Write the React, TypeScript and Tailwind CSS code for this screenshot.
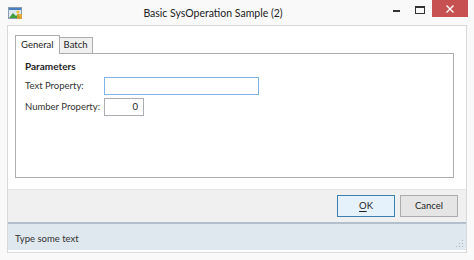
export default function App() {
  return (
    <div className="w-[474px] h-[260px] bg-[#f9f9f9] flex flex-col font-['Lato','Noto_Sans',sans-serif] text-[9.5px] text-[#1e1e1e] overflow-hidden whitespace-nowrap">
      {/* title bar */}
      <div className="h-[25px] flex items-start relative shrink-0">
        <svg className="ml-[8px] mt-[7px]" width="14" height="12" viewBox="0 0 14 12">
          <rect x="0.5" y="0.5" width="13" height="11" fill="#dfe8f2" stroke="#8a9bb0" />
          <rect x="1" y="1" width="12" height="2" fill="#4a7fc0" />
          <path d="M1 11 L5 6 L8 9 L10 7 L13 11 Z" fill="#3f9d3a" />
          <circle cx="10" cy="5" r="1.6" fill="#f2c230" />
          <rect x="9" y="7" width="5" height="5" fill="#e8a020" opacity="0.8" />
        </svg>
        <div className="flex-1 text-center text-[10.5px] leading-none pt-[8px] pl-[20px] text-[#222]">Basic SysOperation Sample (2)</div>
        <div className="flex items-start">
          <div className="w-[24px] h-[17px] flex items-center justify-center pt-[4px]">
            <div className="w-[7px] h-[2px] bg-[#333]" />
          </div>
          <div className="w-[24px] h-[17px] flex items-start justify-center pt-[6px]">
            <div className="w-[10px] h-[8px] border border-[#333] border-t-2" />
          </div>
          <div className="w-[36px] h-[17px] bg-[#c75050] flex items-center justify-center text-white">
            <svg width="8" height="8" viewBox="0 0 8 8">
              <path d="M0.5 0.5 L7.5 7.5 M7.5 0.5 L0.5 7.5" stroke="#fff" strokeWidth="1.4" />
            </svg>
          </div>
          <div className="w-[6px]" />
        </div>
      </div>

      {/* client area */}
      <div className="mx-[7px] border border-[#d9d9d9] border-b-0 flex flex-col bg-white h-[227px]">
        <div className="h-[163px] pl-[7px] pr-[12px] pt-[8px] flex flex-col">
          <div className="flex items-end h-[19px]">
            <div className="h-[19px] px-[5px] border border-[#adadad] border-b-0 bg-white flex items-center relative top-[1px] z-10">General</div>
            <div className="h-[16px] px-[4px] border border-[#adadad] border-l-0 border-b-0 bg-[#f0f0f0] flex items-center">Batch</div>
          </div>
          <div className="h-[125px] border border-[#adadad] bg-white pl-[9px] pt-[5px]">
            <div className="font-bold text-[10px] leading-[14px]">Parameters</div>
            <div className="flex items-center h-[18px] mt-[4px]">
              <div className="w-[79px] text-[#333]">Text Property:</div>
              <div className="w-[155px] h-[18px] border border-[#7eb4ea] bg-white" />
            </div>
            <div className="flex items-center h-[18px] mt-[3px]">
              <div className="w-[79px] text-[#333]">Number Property:</div>
              <div className="w-[40px] h-[18px] border border-[#abadb3] bg-white text-right pr-[5px] leading-[16px]">0</div>
            </div>
          </div>
        </div>

        {/* button bar */}
        <div className="h-[33px] bg-[#f0f0f0] border-t border-[#e3e3e3] flex items-center justify-end gap-[5px] pr-[8px]">
          <div className="w-[58px] h-[22px] border border-[#3c7fb1] bg-[#e5f1fb] flex items-center justify-center">
            <span className="underline underline-offset-2">O</span>K
          </div>
          <div className="w-[58px] h-[22px] border border-[#acacac] bg-[#e5e5e5] flex items-center justify-center">Cancel</div>
        </div>

        {/* status bar */}
        <div className="h-[28px] bg-[#dfe7ef] border-t-2 border-[#b4bfcc] flex items-center pl-[7px] pt-[4px] relative text-[#333]">
          Type some text
          <svg className="absolute right-[2px] bottom-[2px]" width="8" height="8" viewBox="0 0 8 8">
            <rect x="6" y="0" width="1" height="1" fill="#b0b8c0" />
            <rect x="3" y="3" width="1" height="1" fill="#b0b8c0" />
            <rect x="6" y="3" width="1" height="1" fill="#b0b8c0" />
            <rect x="0" y="6" width="1" height="1" fill="#b0b8c0" />
            <rect x="3" y="6" width="1" height="1" fill="#b0b8c0" />
            <rect x="6" y="6" width="1" height="1" fill="#b0b8c0" />
          </svg>
        </div>
      </div>
      <div className="mx-[7px] h-px bg-[#d9d9d9]" />
    </div>
  );
}
